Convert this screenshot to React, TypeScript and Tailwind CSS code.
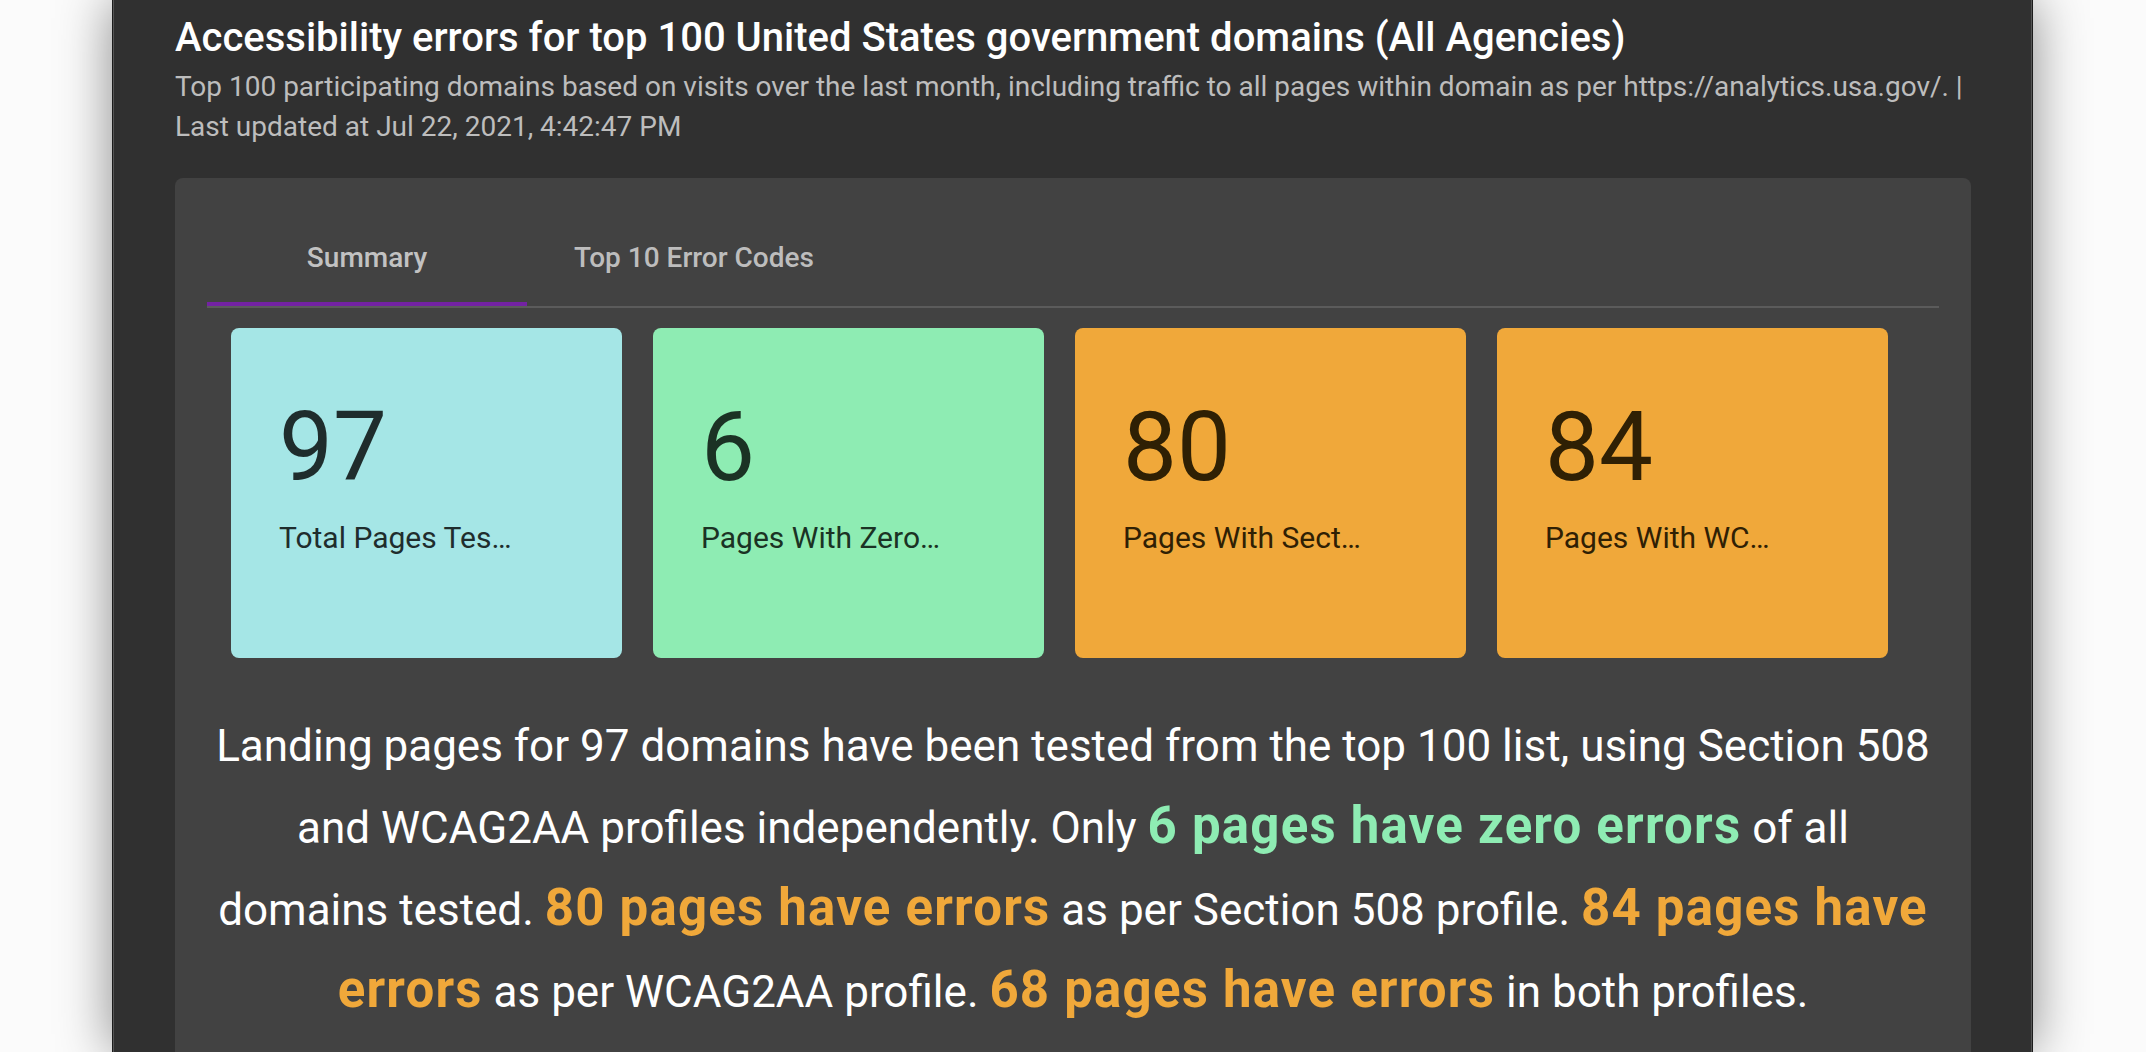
import React from 'react';

const stats = [
    { value: '97', label: 'Total Pages Tested', bg: 'bg-[#a5e6e6]', fg: 'text-[#1f2d2d]' },
    { value: '6', label: 'Pages With Zero Errors', bg: 'bg-[#8eecb3]', fg: 'text-[#1b3224]' },
    { value: '80', label: 'Pages With Section 508 Errors', bg: 'bg-[#f0a83a]', fg: 'text-[#2f2004]' },
    { value: '84', label: 'Pages With WCAG2AA Errors', bg: 'bg-[#f0a83a]', fg: 'text-[#2f2004]' },
];

function StatCard({ value, label, bg, fg }: (typeof stats)[number]) {
    return (
        <div className={`${bg} ${fg} h-[330px] rounded-[8px] pl-[48px] pt-[71px]`}>
            <div className="text-[96px] leading-[96px] font-normal">{value}</div>
            <div className="mt-[25px] w-[240px] truncate text-[30px] leading-[36px]">{label}</div>
        </div>
    );
}

export default function App() {
    return (
        <div
            className="w-full h-[1052px] overflow-hidden bg-[#fbfbfb] pl-[112px]"
            style={{ fontFamily: 'Roboto, "Noto Sans", sans-serif' }}
        >
            <div className="w-[1921px] h-[1052px] bg-[#303030] border-x border-x-[#1c1c1c] shadow-[0_0_50px_rgba(0,0,0,0.45),inset_1px_0_0_#555,inset_-1px_0_0_#555] px-[62px] pt-[16px]">
                {/* Heading */}
                <h1 className="text-[40px] leading-[44px] font-medium text-white">
                    Accessibility errors for top 100 United States government domains (All Agencies)
                </h1>
                <p className="mt-[7px] text-[28px] leading-[40px] text-[#bdbdbd]">
                    Top 100 participating domains based on visits over the last month, including traffic to all pages within domain as per https://analytics.usa.gov/. |
                    <br />
                    Last updated at Jul 22, 2021, 4:42:47 PM
                </p>

                {/* Panel */}
                <div className="mt-[31px] w-[1796px] rounded-[8px] bg-[#424242] px-[32px] pt-[32px] pb-[60px]">
                    {/* Tabs */}
                    <div className="flex border-b-2 border-[#5b5b5b]">
                        <button className="relative w-[320px] h-[96px] text-[28px] font-medium text-[#c2c2c2]">
                            Summary
                            <span className="absolute left-0 right-0 bottom-0 h-[4px] bg-[#7322a3]" />
                        </button>
                        <button className="w-[320px] h-[96px] pl-[14px] text-[28px] font-medium text-[#bdbdbd]">
                            Top 10 Error Codes
                        </button>
                    </div>

                    {/* Stat cards */}
                    <div className="mt-[20px] ml-[24px] w-[1657px] grid grid-cols-4 gap-[31px]">
                        {stats.map((s) => (
                            <StatCard key={s.value} {...s} />
                        ))}
                    </div>

                    {/* Summary sentence */}
                    <p className="mt-[47px] text-center text-white text-[44px] leading-[82px]">
                        Landing pages for 97 domains have been tested from the top 100 list, using Section 508 and WCAG2AA profiles independently. Only{' '}
                        <span className="text-[#8eecb3] font-bold text-[51px] leading-[72px] tracking-[1.2px]">6 pages have zero errors</span> of all domains tested.{' '}
                        <span className="text-[#f0a83a] font-bold text-[51px] leading-[72px] tracking-[1.2px]">80 pages have errors</span> as per Section 508 profile.{' '}
                        <span className="text-[#f0a83a] font-bold text-[51px] leading-[72px] tracking-[1.2px]">84 pages have errors</span> as per WCAG2AA profile.{' '}
                        <span className="text-[#f0a83a] font-bold text-[51px] leading-[72px] tracking-[1.2px]">68 pages have errors</span> in both profiles.
                    </p>
                </div>
            </div>
        </div>
    );
}
